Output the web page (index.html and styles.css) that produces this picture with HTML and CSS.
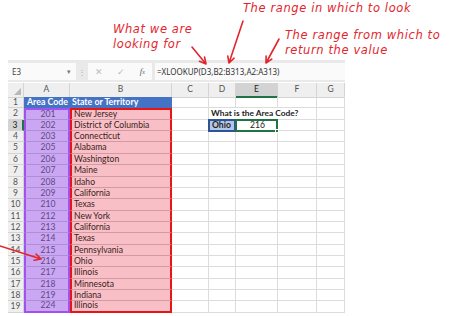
FILE: index.html
```html
<!DOCTYPE html>
<html lang="en">
<head>
    <meta charset="UTF-8">
    <title>XLOOKUP example</title>
    <link rel="stylesheet" href="styles.css">
</head>
<body>
<div class="page">
    <div class="notes">
        <p class="note n1">What we are<br>looking for</p>
        <p class="note n2">The range in which to look</p>
        <p class="note n3">The range from which to<br>return the value</p>
    </div>

    <div class="sheet">
        <div class="fbar">
            <div class="namebox"><span>E3</span><span class="drop">&#9662;</span></div>
            <div class="dots">&#8942;</div>
            <div class="btns"><span>&#10005;</span><span>&#10003;</span><span class="fx">f<small>x</small></span></div>
            <div class="formula">=XLOOKUP(D3,B2:B313,A2:A313)</div>
        </div>

        <div class="row head">
            <div class="corner"></div><div>A</div><div>B</div><div>C</div><div>D</div><div class="sel">E</div><div>F</div><div>G</div>
        </div>
        <div class="row">
            <div class="num">1</div><div class="hd ctr">Area Code</div><div class="hd">State or Territory</div><div></div><div></div><div></div><div></div><div></div>
        </div>
        <div class="row">
            <div class="num">2</div><div class="pu top">201</div><div class="rd top">New Jersey</div><div></div><div class="ask">What is the Area Code?</div><div></div>
        </div>
        <div class="row">
            <div class="num cur">3</div><div class="pu">202</div><div class="rd">District of Columbia</div><div></div><div class="look">Ohio</div><div class="act">216<i></i></div><div></div><div></div>
        </div>
        <div class="row">
            <div class="num">4</div><div class="pu">203</div><div class="rd">Connecticut</div><div></div><div></div><div></div><div></div><div></div>
        </div>
        <div class="row">
            <div class="num">5</div><div class="pu">205</div><div class="rd">Alabama</div><div></div><div></div><div></div><div></div><div></div>
        </div>
        <div class="row">
            <div class="num">6</div><div class="pu">206</div><div class="rd">Washington</div><div></div><div></div><div></div><div></div><div></div>
        </div>
        <div class="row">
            <div class="num">7</div><div class="pu">207</div><div class="rd">Maine</div><div></div><div></div><div></div><div></div><div></div>
        </div>
        <div class="row">
            <div class="num">8</div><div class="pu">208</div><div class="rd">Idaho</div><div></div><div></div><div></div><div></div><div></div>
        </div>
        <div class="row">
            <div class="num">9</div><div class="pu">209</div><div class="rd">California</div><div></div><div></div><div></div><div></div><div></div>
        </div>
        <div class="row">
            <div class="num">10</div><div class="pu">210</div><div class="rd">Texas</div><div></div><div></div><div></div><div></div><div></div>
        </div>
        <div class="row">
            <div class="num">11</div><div class="pu">212</div><div class="rd">New York</div><div></div><div></div><div></div><div></div><div></div>
        </div>
        <div class="row">
            <div class="num">12</div><div class="pu">213</div><div class="rd">California</div><div></div><div></div><div></div><div></div><div></div>
        </div>
        <div class="row">
            <div class="num">13</div><div class="pu">214</div><div class="rd">Texas</div><div></div><div></div><div></div><div></div><div></div>
        </div>
        <div class="row">
            <div class="num">14</div><div class="pu">215</div><div class="rd">Pennsylvania</div><div></div><div></div><div></div><div></div><div></div>
        </div>
        <div class="row">
            <div class="num">15</div><div class="pu">216</div><div class="rd">Ohio</div><div></div><div></div><div></div><div></div><div></div>
        </div>
        <div class="row">
            <div class="num">16</div><div class="pu">217</div><div class="rd">Illinois</div><div></div><div></div><div></div><div></div><div></div>
        </div>
        <div class="row">
            <div class="num">17</div><div class="pu">218</div><div class="rd">Minnesota</div><div></div><div></div><div></div><div></div><div></div>
        </div>
        <div class="row">
            <div class="num">18</div><div class="pu">219</div><div class="rd">Indiana</div><div></div><div></div><div></div><div></div><div></div>
        </div>
        <div class="row">
            <div class="num">19</div><div class="pu bot">224</div><div class="rd bot">Illinois</div><div></div><div></div><div></div><div></div><div></div>
        </div>
    </div>

    <svg class="arrows" width="474" height="316" viewBox="0 0 474 316">
        <g stroke="#e3262d" stroke-width="1.6" fill="none" stroke-linecap="round" stroke-linejoin="round">
            <path d="M192 47 L206 64 M199.5 61.3 L206 64 L204.6 57.1"/>
            <path d="M243 21 L229 63 M234.1 58.2 L229 63 L227.8 56.1"/>
            <path d="M279 39 L266 63 M271.8 59.1 L266 63 L266.1 56"/>
            <path d="M0 246 L41 259 M36.1 254 L41 259 L34.1 260.3"/>
        </g>
    </svg>
</div>
</body>
</html>
```

FILE: styles.css
```css
*{
    margin:0;
    padding:0;
    box-sizing:border-box;
}
body{
    width:474px;
    height:316px;
    overflow:hidden;
    background:#fff;
    font-family:Lato,"Open Sans",sans-serif;
}
.page{
    position:relative;
    width:474px;
    height:316px;
}

/* handwritten notes */
.notes{
    position:relative;
    height:60px;
}
.note{
    position:absolute;
    font-family:"DejaVu Sans",sans-serif;
    font-style:italic;
    font-size:11.5px;
    line-height:14.5px;
    letter-spacing:0.6px;
    color:#e3262d;
    white-space:nowrap;
}
.n1{ left:113px; top:22px; }
.n2{ left:243px; top:1px; }
.n3{ left:285px; top:28px; }

.arrows{
    position:absolute;
    left:0;
    top:0;
    pointer-events:none;
}

/* sheet */
.sheet{
    margin-left:8px;
    width:337px;
}
.fbar{
    display:flex;
    align-items:center;
    height:22px;
    margin-bottom:1px;
    background:#e9e9e9;
    font-family:"Noto Sans",sans-serif;
    font-size:8px;
    color:#444;
}
.namebox{
    display:flex;
    justify-content:space-between;
    align-items:center;
    width:68px;
    height:17px;
    padding:0 5px 0 4px;
    background:#fafafa;
}
.namebox .drop{
    font-size:7px;
    color:#777;
}
.dots{
    width:12px;
    text-align:center;
    color:#aaa;
}
.btns{
    display:flex;
    justify-content:space-around;
    align-items:center;
    width:64px;
    height:17px;
    background:#fafafa;
    color:#bbb;
    font-size:9px;
}
.btns .fx{
    font-family:"Liberation Serif",serif;
    font-style:italic;
    color:#666;
}
.btns .fx small{
    font-size:6px;
}
.formula{
    flex:1;
    height:17px;
    margin-left:3px;
    padding-left:2px;
    line-height:17px;
    background:#fafafa;
    color:#333;
}

.row{
    display:grid;
    grid-template-columns:16px 46px 102px 37px 27px 42px 39px 28px;
    height:11.37px;
    font-size:8.6px;
    line-height:10px;
    color:#222;
}
.row > div{
    border-right:1px solid #dcdcdc;
    border-bottom:1px solid #dcdcdc;
    padding-left:2px;
    white-space:nowrap;
}
.row.head{
    height:14px;
    background:#efefef;
    color:#555;
    font-size:8.5px;
    line-height:13px;
    text-align:center;
}
.row.head > div{
    padding:0;
    border-color:#d4d4d4;
}
.row.head .sel{
    background:#d3d3d3;
    border-bottom:2px solid #217346;
    color:#222;
}
.corner{
    position:relative;
}
.corner::after{
    content:"";
    position:absolute;
    right:2px;
    bottom:2px;
    border-left:7px solid transparent;
    border-bottom:7px solid #b8b8b8;
}
.row .num{
    padding:0;
    background:#efefef;
    color:#555;
    font-size:8.5px;
    text-align:center;
    border-color:#d4d4d4;
}
.row .num.cur{
    background:#d3d3d3;
    color:#222;
    border-right:2px solid #217346;
}
.row .hd{
    background:#4472c4;
    border-color:#4472c4;
    color:#fff;
    font-size:8.8px;
    font-weight:bold;
}
.ctr{
    text-align:center;
}

/* looked-up ranges */
.row .pu{
    background:#cba6f3;
    color:#5e4a86;
    text-align:center;
    border-left:2px solid #a152ee;
    border-right:2px solid #a152ee;
    border-bottom-color:#ad8fd3;
}
.row .rd{
    background:#f8bfc6;
    color:#3a2222;
    border-left:2px solid #e81515;
    border-right:2px solid #e81515;
    border-bottom-color:#d39aa3;
}
.row .top{
    border-top:2px solid;
    line-height:8px;
}
.row .pu.top{ border-top-color:#a152ee; }
.row .rd.top{ border-top-color:#e81515; }
.row .pu.bot{ border-bottom:2px solid #a152ee; line-height:9px; }
.row .rd.bot{ border-bottom:2px solid #e81515; line-height:9px; }

.row .ask{
    grid-column:span 3;
    font-weight:bold;
    font-size:8.4px;
}
.row .look,
.row .act{
    margin:-1px 0 -1px -1px;
    line-height:9.4px;
    z-index:1;
}
.row .look{
    background:#b4c6e7;
    border:2px solid #2f5496;
    font-weight:bold;
    padding-left:2px;
}
.row .act{
    position:relative;
    border:2px solid #217346;
    background:#fff;
    text-align:center;
}
.act i{
    position:absolute;
    right:-3px;
    bottom:-3px;
    width:4px;
    height:4px;
    background:#217346;
    border:1px solid #fff;
}
```
